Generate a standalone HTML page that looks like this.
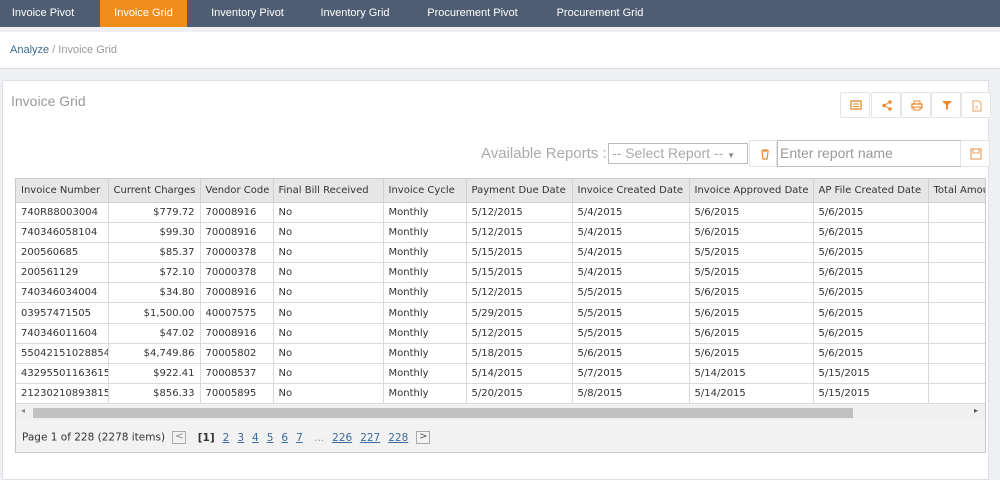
<!DOCTYPE html>
<html><head><meta charset="utf-8"><style>
*{box-sizing:border-box;margin:0;padding:0}
body{width:1000px;height:465px;overflow:hidden;background:#eef0f3;font-family:"Liberation Sans",sans-serif;position:relative}
.nav{position:absolute;left:0;top:0;width:1000px;height:27px;background:#4e5d72}
.nav span{position:absolute;top:0;height:27px;line-height:26px;color:#fff;font-size:11px;text-align:center}
.crumb{position:absolute;left:0;top:32px;width:1000px;height:37px;background:#fff;border-bottom:1px solid #dde1e6;font-size:11px;line-height:36px;padding-left:10px;color:#999}
.crumb b{font-weight:normal;color:#3a6a8e}
.panel{position:absolute;left:2px;top:80px;width:987px;height:400px;background:#fff;border:1px solid #dde1e6}
.title{position:absolute;left:8px;top:12px;font-size:14px;color:#999}
.btn{position:absolute;top:11px;width:30px;height:26px;border:1px solid #e4e4e4;border-radius:2px;background:#fff}
.btn svg{position:absolute;left:9px;top:7px}
.avail{position:absolute;left:478px;top:64px;font-size:15px;color:#aaa}
.sel{position:absolute;left:605px;top:62px;width:140px;height:21px;border:1px solid #bbb;font-size:14px;color:#aaa;line-height:19px;padding-left:3px;white-space:nowrap}
.inp{position:absolute;left:774px;top:59px;width:184px;height:27px;border:1px solid #bbb;font-size:14px;color:#999;line-height:25px;padding-left:2px}
.grid{position:absolute;left:12px;top:97px;width:971px;height:275px;border:1px solid #c8c8c8;background:#f2f2f2;overflow:hidden}
table{width:992px;border-collapse:collapse;font-family:"DejaVu Sans",sans-serif;font-size:10px;color:#333;table-layout:fixed;position:absolute;left:0;top:0}
td,th{height:20.2px;border-right:1px solid #d9d9d9;border-bottom:1px solid #d9d9d9;padding:0 5px;white-space:nowrap;overflow:hidden;font-weight:normal;text-align:left;background:#fff}
th{height:23px;background:#e6e6e6;border-color:#cfcfcf}
td.r{text-align:right}
.sb{position:absolute;left:0;top:226px;width:969px;height:15px;background:#f0f0f0}
.thumb{position:absolute;left:17px;top:3px;width:820px;height:10px;background:#c1c1c1}
.pg{position:absolute;left:6px;top:252px;font-family:"DejaVu Sans",sans-serif;font-size:10.5px;color:#333;white-space:nowrap}
.pg a{color:#3a6a9e;text-decoration:underline;margin:0 4px}
.pb{display:inline-block;width:14px;height:13px;border:1px solid #aaa;vertical-align:middle;text-align:center;line-height:10px;font-size:10px;color:#888;margin:0 4px}
</style></head><body>
<div class="nav">
<span style="left:0;width:86px">Invoice Pivot</span>
<span style="left:100px;width:87px;background:#ef8e1d">Invoice Grid</span>
<span style="left:200px;width:95px">Inventory Pivot</span>
<span style="left:310px;width:90px">Inventory Grid</span>
<span style="left:415px;width:115px">Procurement Pivot</span>
<span style="left:545px;width:110px">Procurement Grid</span>
</div>
<div class="crumb"><b>Analyze</b> / Invoice Grid</div>
<div class="panel">
<div class="title">Invoice Grid</div>
<div class="btn" style="left:837px"><svg width="12" height="10"><rect x="1" y="1" width="10" height="8" fill="none" stroke="#e8892a" stroke-width="1.3"/><line x1="3" y1="4" x2="9" y2="4" stroke="#e8892a"/><line x1="3" y1="6.5" x2="9" y2="6.5" stroke="#e8892a"/></svg></div>
<div class="btn" style="left:868px"><svg width="12" height="11"><circle cx="9" cy="2" r="1.7" fill="#e8892a"/><circle cx="3" cy="5.5" r="1.7" fill="#e8892a"/><circle cx="9" cy="9" r="1.7" fill="#e8892a"/><path d="M9 2L3 5.5L9 9" stroke="#e8892a" fill="none"/></svg></div>
<div class="btn" style="left:898px"><svg width="12" height="11"><rect x="3" y="1" width="6" height="3" fill="none" stroke="#e8892a"/><rect x="1" y="4" width="10" height="4" fill="none" stroke="#e8892a" stroke-width="1.3"/><rect x="3" y="7" width="6" height="3" fill="#fff" stroke="#e8892a"/></svg></div>
<div class="btn" style="left:928px"><svg width="12" height="11"><path d="M1 1H11L7 5V10L5 9V5Z" fill="#e8892a"/></svg></div>
<div class="btn" style="left:958px"><svg width="12" height="12"><path d="M2 1H8L10 3V11H2Z" fill="none" stroke="#e8a060"/><text x="4" y="9" font-size="6" fill="#e8a060" font-family="Liberation Sans">x</text></svg></div>
<div class="avail">Available Reports :</div>
<div class="sel">-- Select Report -- <span style="font-size:8px;color:#888">▼</span></div>
<div class="btn" style="left:746px;top:59px;height:27px;width:28px"><svg width="12" height="12"><path d="M2 3H10M4 3V2H8V3M3 4L4 11H8L9 4" fill="none" stroke="#e8892a" stroke-width="1.2"/></svg></div>
<div class="inp">Enter report name</div>
<div class="btn" style="left:957px;top:59px;height:27px"><svg width="12" height="12"><rect x="1" y="1" width="10" height="10" fill="none" stroke="#e8a060" stroke-width="1.2"/><rect x="3" y="1" width="6" height="4" fill="none" stroke="#e8a060"/></svg></div>
<div class="grid">
<table>
<colgroup><col style="width:92px"><col style="width:92px"><col style="width:73px"><col style="width:110px"><col style="width:83px"><col style="width:106px"><col style="width:117px"><col style="width:124px"><col style="width:115px"><col style="width:80px"></colgroup>
<tr><th>Invoice Number</th><th>Current Charges</th><th>Vendor Code</th><th>Final Bill Received</th><th>Invoice Cycle</th><th>Payment Due Date</th><th>Invoice Created Date</th><th>Invoice Approved Date</th><th>AP File Created Date</th><th>Total Amount</th></tr>
<tr><td>740R88003004</td><td class="r">$779.72</td><td>70008916</td><td>No</td><td>Monthly</td><td>5/12/2015</td><td>5/4/2015</td><td>5/6/2015</td><td>5/6/2015</td><td class="r">$1</td></tr>
<tr><td>740346058104</td><td class="r">$99.30</td><td>70008916</td><td>No</td><td>Monthly</td><td>5/12/2015</td><td>5/4/2015</td><td>5/6/2015</td><td>5/6/2015</td><td></td></tr>
<tr><td>200560685</td><td class="r">$85.37</td><td>70000378</td><td>No</td><td>Monthly</td><td>5/15/2015</td><td>5/4/2015</td><td>5/5/2015</td><td>5/6/2015</td><td></td></tr>
<tr><td>200561129</td><td class="r">$72.10</td><td>70000378</td><td>No</td><td>Monthly</td><td>5/15/2015</td><td>5/4/2015</td><td>5/5/2015</td><td>5/6/2015</td><td></td></tr>
<tr><td>740346034004</td><td class="r">$34.80</td><td>70008916</td><td>No</td><td>Monthly</td><td>5/12/2015</td><td>5/5/2015</td><td>5/6/2015</td><td>5/6/2015</td><td></td></tr>
<tr><td>03957471505</td><td class="r">$1,500.00</td><td>40007575</td><td>No</td><td>Monthly</td><td>5/29/2015</td><td>5/5/2015</td><td>5/6/2015</td><td>5/6/2015</td><td class="r">$1</td></tr>
<tr><td>740346011604</td><td class="r">$47.02</td><td>70008916</td><td>No</td><td>Monthly</td><td>5/12/2015</td><td>5/5/2015</td><td>5/6/2015</td><td>5/6/2015</td><td></td></tr>
<tr><td>55042151028854</td><td class="r">$4,749.86</td><td>70005802</td><td>No</td><td>Monthly</td><td>5/18/2015</td><td>5/6/2015</td><td>5/6/2015</td><td>5/6/2015</td><td class="r">$4</td></tr>
<tr><td>43295501163615</td><td class="r">$922.41</td><td>70008537</td><td>No</td><td>Monthly</td><td>5/14/2015</td><td>5/7/2015</td><td>5/14/2015</td><td>5/15/2015</td><td class="r">$</td></tr>
<tr><td>21230210893815</td><td class="r">$856.33</td><td>70005895</td><td>No</td><td>Monthly</td><td>5/20/2015</td><td>5/8/2015</td><td>5/14/2015</td><td>5/15/2015</td><td class="r">$</td></tr>
</table>
<div class="sb"><span style="position:absolute;left:5px;top:1px;font-size:8px;color:#888">◂</span><div class="thumb"></div><span style="position:absolute;left:958px;top:1px;font-size:8px;color:#555">▸</span></div>
<div class="pg">Page 1 of 228 (2278 items) <span class="pb">&lt;</span> <b style="margin:0 4px">[1]</b><a>2</a><a>3</a><a>4</a><a>5</a><a>6</a><a>7</a> <span style="color:#999;margin:0 4px">...</span><a>226</a><a>227</a><a>228</a><span class="pb" style="color:#555">&gt;</span></div>
</div>
</div>
</body></html>
